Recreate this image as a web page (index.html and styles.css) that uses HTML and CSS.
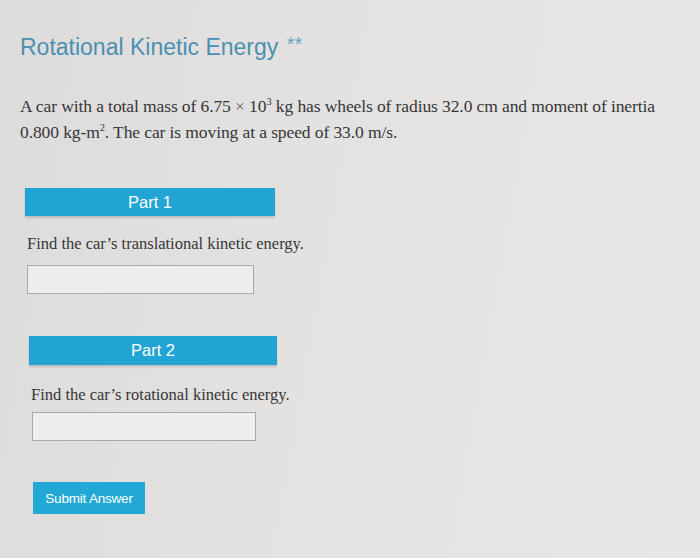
FILE: index.html
```html
<!DOCTYPE html>
<html>
<head>
<meta charset="utf-8">
<link rel="stylesheet" href="styles.css">
</head>
<body>
<div class="page">
  <h1 class="title">Rotational Kinetic Energy <span class="stars">**</span></h1>
  <p class="problem"><span>A car with a total mass of 6.75 <span class="times">&times;</span> 10<sup>3</sup> kg has wheels of radius 32.0 cm and moment of inertia</span> <span>0.800 kg-m<sup>2</sup>. The car is moving at a speed of 33.0 m/s.</span></p>

  <section class="part part1">
    <div class="part-bar">Part 1</div>
    <p class="question">Find the car’s translational kinetic energy.</p>
    <div class="answer"></div>
  </section>

  <section class="part part2">
    <div class="part-bar">Part 2</div>
    <p class="question">Find the car’s rotational kinetic energy.</p>
    <div class="answer"></div>
  </section>

  <div class="submit-wrap">
    <button class="submit">Submit Answer</button>
  </div>
</div>
</body>
</html>
```

FILE: styles.css
```css
html, body {
  margin: 0;
  padding: 0;
}
body {
  width: 700px;
  height: 558px;
  overflow: hidden;
  background: linear-gradient(100deg, #dedcda 0%, #e5e3e1 50%, #e9e7e6 100%);
}
.page {
  padding: 29px 0 0 20px;
}
.title {
  margin: 0;
  font-family: "Liberation Sans", Arial, sans-serif;
  font-weight: normal;
  font-size: 23px;
  line-height: 30px;
  color: #4a90b3;
}
.stars {
  margin-left: 2px;
  font-size: 20px;
  color: #6aa7c4;
  vertical-align: 4px;
}
.problem {
  margin: 31px 0 0 0;
  width: 650px;
  font-family: "Liberation Serif", "Times New Roman", serif;
  font-size: 17.5px;
  line-height: 26px;
  color: #363638;
  letter-spacing: -0.1px;
}
.problem sup {
  font-size: 10.5px;
  line-height: 0;
  vertical-align: 7px;
}
.times {
  color: #666;
}
.part-bar {
  width: 250px;
  height: 28px;
  background: #22a5d5;
  color: #ffffff;
  font-family: "Liberation Sans", Arial, sans-serif;
  font-size: 16.5px;
  line-height: 28px;
  text-align: center;
  box-shadow: 0 2px 2px rgba(0,0,0,0.15);
}
.part1 {
  margin: 43px 0 0 5px;
}
.part2 {
  margin: 42px 0 0 9px;
}
.part2 .part-bar {
  width: 248px;
  height: 29px;
  line-height: 29px;
}
.question {
  margin: 17px 0 0 2px;
  font-family: "Liberation Serif", "Times New Roman", serif;
  font-size: 16.5px;
  line-height: 22px;
  color: #363638;
}
.answer {
  margin: 10px 0 0 2px;
  width: 225px;
  height: 27px;
  background: #eeedec;
  border: 1px solid #a9a9a9;
}
.part2 .question {
  margin-top: 19px;
}
.part2 .answer {
  margin-top: 6px;
  width: 222px;
  margin-left: 3px;
}
.submit-wrap {
  margin: 41px 0 0 13px;
}
.submit {
  width: 112px;
  height: 32px;
  border: none;
  padding: 0;
  background: #22a8d4;
  color: #ffffff;
  font-family: "Liberation Sans", Arial, sans-serif;
  font-size: 13.5px;
  letter-spacing: -0.2px;
}
```
